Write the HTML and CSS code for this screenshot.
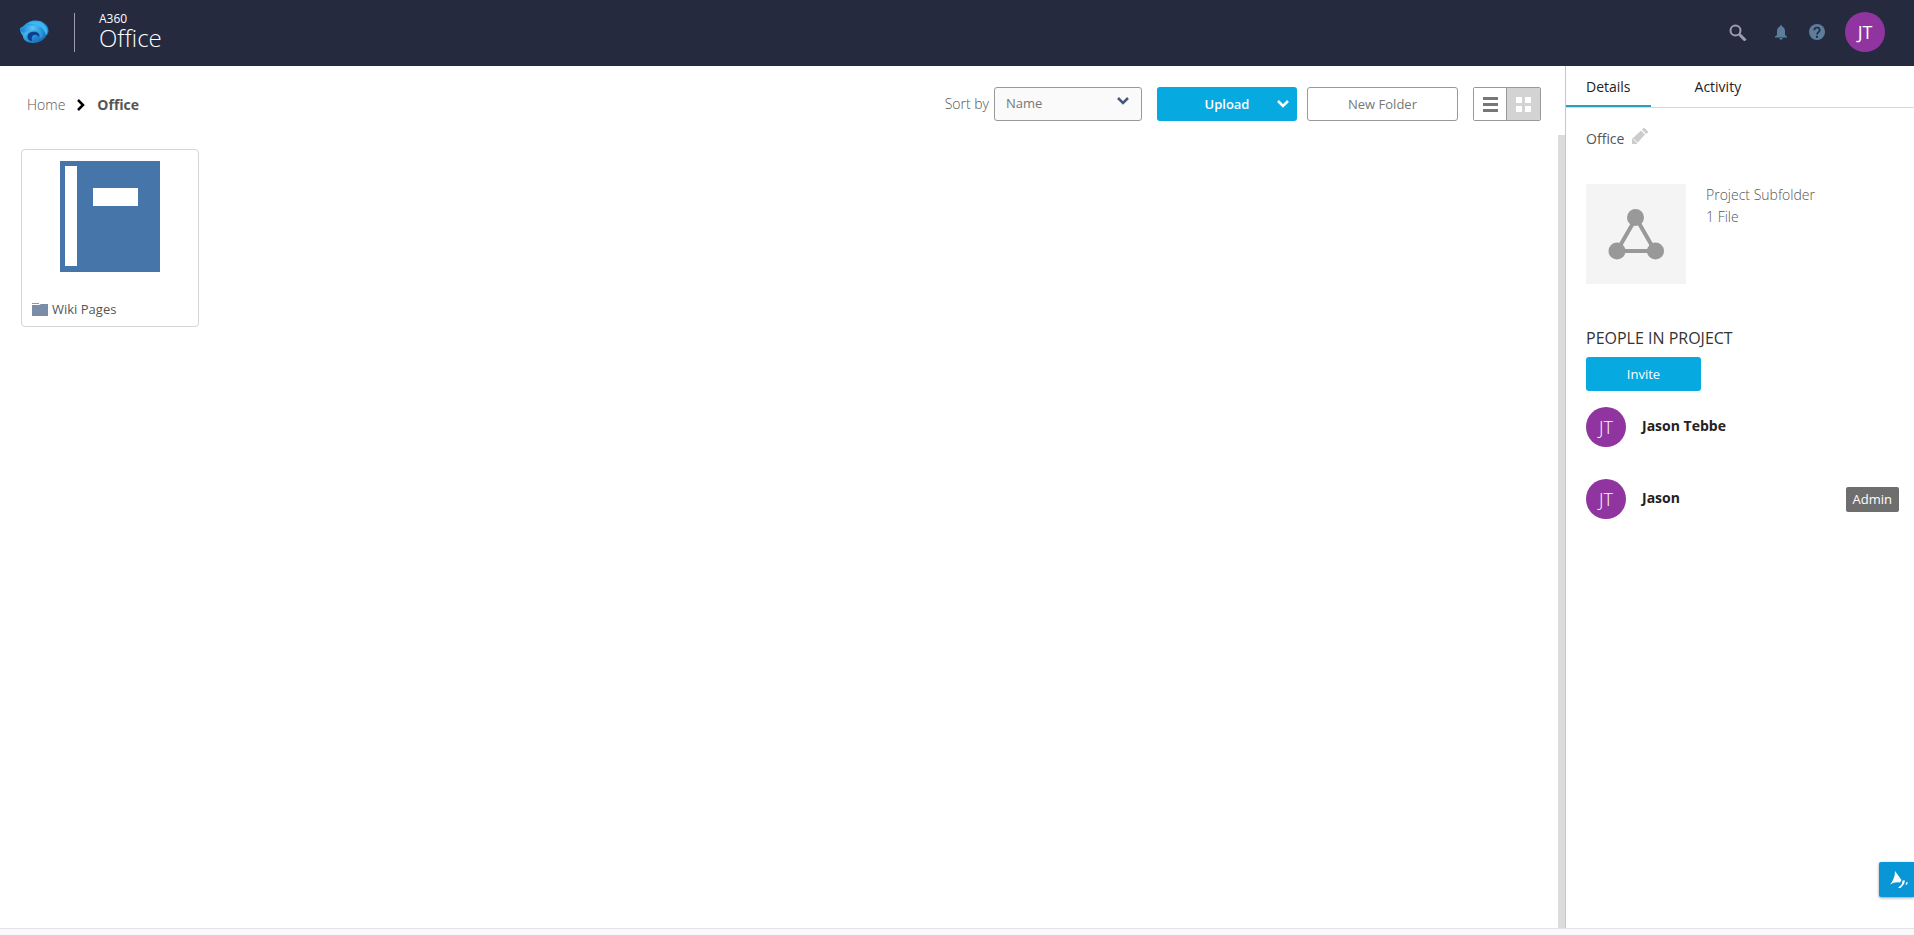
FILE: index.html
```html
<!DOCTYPE html>
<html lang="en">
<head>
    <meta charset="UTF-8">
    <meta name="viewport" content="width=device-width, initial-scale=1.0">
    <title>Office - A360</title>
    <link rel="stylesheet" href="styles.css">
</head>
<body>
    <header class="topbar">
        <a href="#" class="logo" aria-label="A360 home">
            <svg width="30" height="24" viewBox="0 0 30 24">
                <defs>
                    <linearGradient id="swirlOuter" x1="0" y1="0" x2="1" y2="1">
                        <stop offset="0" stop-color="#1a90dc"/>
                        <stop offset="0.4" stop-color="#2fb0ee"/>
                        <stop offset="1" stop-color="#1055a4"/>
                    </linearGradient>
                    <linearGradient id="swirlBand" x1="0" y1="0" x2="1" y2="0">
                        <stop offset="0" stop-color="#1b7fd0"/>
                        <stop offset="0.5" stop-color="#58c6f5"/>
                        <stop offset="1" stop-color="#1a86d4"/>
                    </linearGradient>
                    <linearGradient id="swirlInner" x1="0" y1="0" x2="1" y2="1">
                        <stop offset="0" stop-color="#4fc6f4"/>
                        <stop offset="1" stop-color="#1268ba"/>
                    </linearGradient>
                </defs>
                <path d="M0 8C3 7 5 4 8 2.500C13 -0.500 21 0 25 4C29 7 30 13 26 16C24 20 19 23 13 23C7 23 3 20 3 16C1 14 0 11 0 8Z" fill="url(#swirlOuter)"/>
                <path d="M8 3.500C14 0 22 2 25 6C28 9 28 13 26 15C25 9 18 4 8 3.500Z" fill="#3db8f0"/>
                <path d="M1 9C7 5 17 4 22 8C26 12 24 16 20 18C20 12 14 8 4 13C2 12 1 11 1 9Z" fill="url(#swirlBand)"/>
                <path d="M4 14C8 9 16 9 19 13C21 17 17 21 12 22C7 22 4 19 4 14Z" fill="url(#swirlInner)"/>
                <path d="M8 19C6 14 10 11 16 12C19 13 20 15 19 17C17 14 13 14 12 17C11 19 13 21 12 21C10 21 9 20 8 19Z" fill="#0c3f8d"/>
            </svg>
        </a>
        <div class="project">
            <span class="product-name">A360</span>
            <span class="project-name">Office</span>
        </div>
        <div class="top-actions">
            <button class="icon-button search" aria-label="Search">
                <svg width="18" height="18" viewBox="0 0 18 18" fill="none" stroke="#9b9fb0">
                    <circle cx="6.500" cy="7.500" r="5" stroke-width="2"/>
                    <path d="M10.500 11.500L16.500 17.500" stroke-width="3"/>
                </svg>
            </button>
            <button class="icon-button" aria-label="Notifications">
                <svg width="14" height="16" viewBox="0 0 14 16" fill="#5d7d9c">
                    <path d="M5 2.500Q5 1 6 1Q7 1 7 2.500Q10 3.500 10 7.500V11L12 12.500V13.500H0V12.500L2 11V7.500Q2 3.500 5 2.500Z"/>
                    <path d="M4.300 14H7.700Q7.500 15.800 6 15.800Q4.500 15.800 4.300 14Z"/>
                </svg>
            </button>
            <button class="icon-button" aria-label="Help">
                <svg width="16" height="16" viewBox="0 0 16 16">
                    <circle cx="8" cy="8" r="8" fill="#5d7d9c"/>
                    <path d="M5.300 6.200C5.300 2.600 10.700 2.600 10.700 6.200C10.700 8 8 8.200 8 10.500" fill="none" stroke="#262a3e" stroke-width="1.700"/>
                    <rect x="7" y="11.800" width="2" height="2" fill="#262a3e"/>
                </svg>
            </button>
            <button class="avatar user">JT</button>
        </div>
    </header>

    <div class="content">
        <main class="files">
            <div class="toolbar">
                <nav class="breadcrumb">
                    <a href="#">Home</a>
                    <svg width="8" height="12" viewBox="0 0 8 12" fill="none" stroke="#000" stroke-width="2.500">
                        <path d="M1 1L6 6L1 11"/>
                    </svg>
                    <strong>Office</strong>
                </nav>
                <label for="sort" class="sort-label">Sort by</label>
                <div class="select-wrap">
                    <select id="sort">
                        <option>Name</option>
                    </select>
                    <svg class="select-arrow" width="12" height="8" viewBox="0 0 12 8" fill="none" stroke="#48587c" stroke-width="2.500">
                        <path d="M1 1L6 6L11 1"/>
                    </svg>
                </div>
                <button class="upload">
                    <span>Upload</span>
                    <svg width="12" height="8" viewBox="0 0 12 8" fill="none" stroke="#fff" stroke-width="2.500">
                        <path d="M1 1L6 6L11 1"/>
                    </svg>
                </button>
                <button class="new-folder">New Folder</button>
                <div class="view-toggle">
                    <button aria-label="List view">
                        <svg width="15" height="15" viewBox="0 0 15 15" fill="#777">
                            <rect width="15" height="3"/>
                            <rect y="6" width="15" height="3"/>
                            <rect y="12" width="15" height="3"/>
                        </svg>
                    </button>
                    <button class="active" aria-label="Grid view">
                        <svg width="15" height="15" viewBox="0 0 15 15" fill="#fff">
                            <rect width="6" height="6"/>
                            <rect x="9" width="6" height="6"/>
                            <rect y="9" width="6" height="6"/>
                            <rect x="9" y="9" width="6" height="6"/>
                        </svg>
                    </button>
                </div>
            </div>
            <div class="file-area">
                <div class="grid">
                    <a href="#" class="card">
                        <svg width="100" height="111" viewBox="0 0 100 111">
                            <rect width="100" height="111" fill="#4675a9"/>
                            <rect x="5" y="5" width="12" height="100" fill="#fff"/>
                            <rect x="33" y="27" width="45" height="18" fill="#fff"/>
                        </svg>
                        <span class="card-name">
                            <svg width="16" height="13" viewBox="0 0 16 13">
                                <path d="M0 0H7V1H0Z" fill="#8798ae"/>
                                <path d="M0 2H7L9 1H16V13H0Z" fill="#7b8da6"/>
                            </svg>
                            Wiki Pages
                        </span>
                    </a>
                </div>
                <div class="scroll-track"></div>
            </div>
        </main>

        <aside class="details">
            <div class="tabs">
                <button class="active">Details</button>
                <button>Activity</button>
            </div>
            <div class="details-body">
                <div class="item-title">
                    <span>Office</span>
                    <button class="icon-button" aria-label="Rename">
                        <svg width="16" height="16" viewBox="0 0 16 16" fill="#ccc">
                            <path d="M0 16V11L9 2.500L13 6.500L4.500 16Z"/>
                            <path d="M10 1.500L11.500 0H12.500L16 3.500V4.500L14 6Z"/>
                            <path d="M1.500 11L5.500 15" stroke="#fff" fill="none"/>
                        </svg>
                    </button>
                </div>
                <div class="item-info">
                    <div class="thumb">
                        <svg width="56" height="52" viewBox="0 0 56 52" fill="#999" stroke="#999">
                            <path d="M28 10L47 43H9Z" fill="none" stroke-width="4"/>
                            <circle cx="27.500" cy="9.500" r="8.500" stroke="none"/>
                            <circle cx="9" cy="43" r="8.500" stroke="none"/>
                            <circle cx="47.500" cy="43" r="8.500" stroke="none"/>
                        </svg>
                    </div>
                    <div class="item-meta">
                        <p>Project Subfolder</p>
                        <p>1 File</p>
                    </div>
                </div>
                <h2>PEOPLE IN PROJECT</h2>
                <button class="invite">Invite</button>
                <ul class="people">
                    <li>
                        <span class="avatar">JT</span>
                        <span class="person">Jason Tebbe</span>
                    </li>
                    <li>
                        <span class="avatar">JT</span>
                        <span class="person">Jason</span>
                        <span class="role">Admin</span>
                    </li>
                </ul>
            </div>
        </aside>
    </div>

    <footer class="footer"></footer>

    <button class="feedback" aria-label="Feedback">
        <svg width="18" height="18" viewBox="0 0 18 18" fill="#fff">
            <path d="M5 0L11.500 9L10 11.500Q5 10.500 0 13.500Q5 8 5 0Z"/>
            <path d="M12.500 9.500H15L14 13L10.500 17H8L12 13Z"/>
            <path d="M16.500 11L18 11.500L16.500 14L15.500 13.500Z"/>
        </svg>
    </button>
</body>
</html>
```
FILE: styles.css
```css
* {
    box-sizing: border-box;
}
body {
    margin: 0;
    min-height: 100vh;
    display: flex;
    flex-direction: column;
    font-family: "Open Sans", sans-serif;
    font-size: 14px;
    line-height: 20px;
    color: #555;
    background: #fff;
}
button, select {
    font-family: inherit;
    font-size: 13px;
    cursor: pointer;
}
a {
    color: inherit;
    text-decoration: none;
}
svg {
    display: block;
    flex: none;
}

/* Top bar */
.topbar {
    display: flex;
    align-items: center;
    height: 66px;
    padding: 0 29px 2px 20px;
    background: #262a3e;
    color: #fff;
}
.logo {
    padding-right: 24px;
}
.project {
    display: flex;
    flex-direction: column;
    height: 39px;
    padding-left: 24px;
    border-left: 1px solid #9b9dab;
}
.product-name {
    font-size: 12px;
    line-height: 12px;
}
.project-name {
    font-size: 24px;
    font-weight: 300;
    line-height: 26px;
}
.top-actions {
    display: flex;
    align-items: center;
    gap: 20px;
    margin-left: auto;
}
.icon-button {
    padding: 0;
    border: 0;
    background: none;
}
.search {
    margin-right: 8px;
}
.avatar {
    display: flex;
    align-items: center;
    justify-content: center;
    width: 40px;
    height: 40px;
    padding: 0;
    border: 0;
    border-radius: 50%;
    background: #9035a0;
    color: #fff;
    font-size: 18px;
    font-weight: 300;
}
.avatar.user {
    font-weight: 400;
}

/* Main area */
.content {
    flex: 1;
    display: flex;
}
.files {
    flex: 1;
    display: flex;
    flex-direction: column;
}
.toolbar {
    display: flex;
    align-items: center;
    height: 69px;
    padding: 7px 24px 0 27px;
}
.breadcrumb {
    display: flex;
    align-items: center;
    gap: 12px;
    margin-right: auto;
    padding-top: 2px;
}
.breadcrumb a,
.sort-label {
    font-weight: 300;
}
.select-wrap {
    position: relative;
    margin: 0 15px 0 5px;
}
.select-wrap select {
    display: block;
    width: 148px;
    height: 34px;
    padding: 0 11px 2px;
    border: 1px solid #999;
    border-radius: 3px;
    background: #fafafa;
    color: #777;
    appearance: none;
}
.select-arrow {
    position: absolute;
    top: 10px;
    right: 13px;
    pointer-events: none;
}
.upload {
    display: flex;
    align-items: center;
    width: 140px;
    height: 34px;
    margin-right: 10px;
    padding: 0 8px 0 20px;
    border: 0;
    border-radius: 3px;
    background: #06a9e0;
    color: #fff;
    font-weight: 600;
}
.upload span {
    flex: 1;
}
.new-folder {
    width: 151px;
    height: 34px;
    margin-right: 15px;
    border: 1px solid #999;
    border-radius: 3px;
    background: #fff;
    color: #777;
}
.view-toggle {
    display: flex;
    height: 34px;
    border: 1px solid #999;
    border-radius: 2px;
}
.view-toggle button {
    display: flex;
    align-items: center;
    justify-content: center;
    width: 32px;
    padding: 0;
    border: 0;
    background: #fff;
}
.view-toggle .active {
    width: 34px;
    border-left: 1px solid #999;
    background: #d3d3d3;
}
.file-area {
    flex: 1;
    display: flex;
}
.grid {
    flex: 1;
    display: flex;
    flex-wrap: wrap;
    align-content: flex-start;
    padding: 14px 21px;
}
.card {
    display: flex;
    flex-direction: column;
    align-items: center;
    justify-content: space-between;
    width: 178px;
    height: 178px;
    padding: 11px 10px 7px;
    border: 1px solid #d6d6d6;
    border-radius: 4px;
    font-size: 13px;
}
.card-name {
    display: flex;
    align-items: center;
    align-self: stretch;
    gap: 4px;
}
.scroll-track {
    width: 7px;
    background: #dcdcdc;
}

/* Details panel */
.details {
    width: 349px;
    border-left: 1px solid #c8c8c8;
}
.tabs {
    display: flex;
    gap: 24px;
    height: 42px;
    border-bottom: 1px solid #d8d8d8;
}
.tabs button {
    height: 41px;
    padding: 2px 20px 0;
    border: 0;
    border-bottom: 2px solid transparent;
    background: none;
    color: #222;
    font-size: 14px;
}
.tabs .active {
    border-color: #2b9fbf;
}
.details-body {
    padding: 20px 15px 0 20px;
}
.item-title {
    display: flex;
    align-items: flex-start;
    gap: 8px;
    height: 56px;
    line-height: 22px;
}
.item-info {
    display: flex;
    gap: 20px;
}
.thumb {
    display: flex;
    align-items: center;
    justify-content: center;
    width: 100px;
    height: 100px;
    background: #f4f4f4;
}
.item-meta p {
    margin: 0;
    font-weight: 300;
    line-height: 22px;
}
.details h2 {
    margin: 43px 0 8px;
    color: #333;
    font-size: 16px;
    font-weight: 400;
    line-height: 22px;
}
.invite {
    display: block;
    width: 115px;
    height: 34px;
    border: 0;
    border-radius: 3px;
    background: #06a9e0;
    color: #fff;
}
.people {
    display: flex;
    flex-direction: column;
    gap: 32px;
    margin: 16px 0 0;
    padding: 0;
    list-style: none;
}
.people li {
    display: flex;
    align-items: center;
    gap: 16px;
}
.person {
    padding-bottom: 2px;
    color: #222;
    font-weight: 700;
}
.role {
    margin-left: auto;
    padding: 2px 7px 3px;
    border-radius: 2px;
    background: #6e6e6e;
    color: #fff;
    font-size: 13px;
}

.footer {
    height: 7px;
    border-top: 1px solid #e4e4e6;
    background: #f9f9fb;
}
.feedback {
    position: fixed;
    right: 0;
    bottom: 38px;
    width: 35px;
    height: 35px;
    padding: 0 6px 0 11px;
    border: 0;
    border-radius: 2px 0 0 2px;
    background: #0896d7;
    box-shadow: 0 1px 3px rgba(0,0,0,0.4);
}
```
